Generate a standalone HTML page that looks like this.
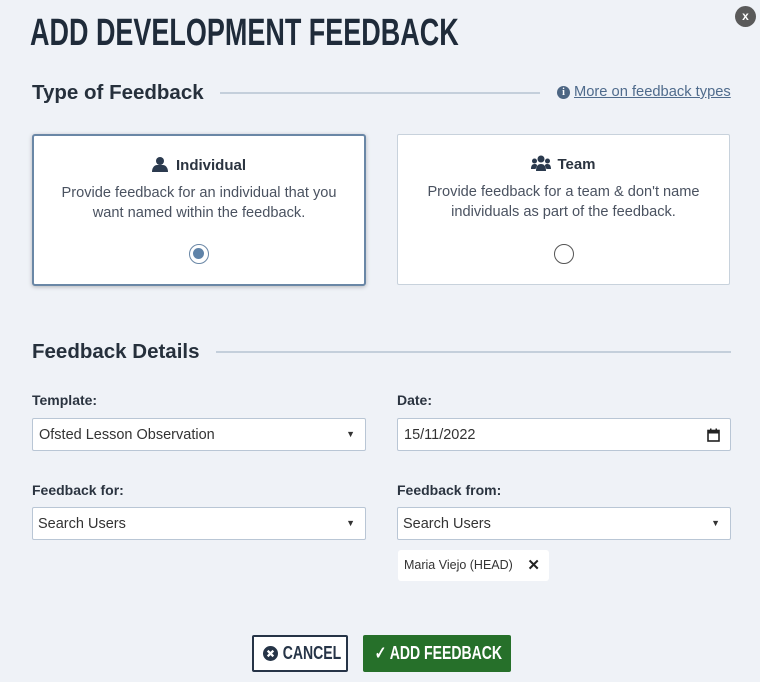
<!DOCTYPE html>
<html><head><meta charset="utf-8"><style>
*{box-sizing:border-box;margin:0;padding:0}
body{width:760px;height:682px;background:#eff2f7;font-family:"Liberation Sans",sans-serif;color:#2b3440;position:relative;overflow:hidden}
.abs{position:absolute}
.title{left:30px;top:12px;font-weight:bold;font-size:38px;color:#1f2b3a;transform:scaleX(0.71);transform-origin:left top;white-space:nowrap}
.h2{font-size:20.5px;font-weight:bold;color:#26303c;white-space:nowrap}
.line{height:2px;background:#c4cfdb}
.card{background:#fff;text-align:center}
.card .t{font-weight:bold;font-size:15px;margin-top:20px;color:#2b3440}
.card .d{font-size:14.6px;line-height:20px;color:#4a5260;margin-top:9px;white-space:nowrap}
.radio{position:absolute;width:20px;height:20px;border-radius:50%;border:1.5px solid #555;left:50%;margin-left:-10px;top:109px;background:#fff}
.lbl{font-size:14px;font-weight:bold;color:#2b3440}
.inp{background:#fff;border:1px solid #b9c6d5;border-radius:2px;height:33px;font-size:14.5px;line-height:33px;padding-left:6px;color:#333}
.arr{position:absolute;right:10px;top:0;font-size:9px;color:#333;line-height:31px}
.btn{font-weight:bold;font-size:18px;text-align:center;border-radius:2px;white-space:nowrap}
.sq{display:inline-block;transform:scaleX(0.78);transform-origin:center}
</style></head><body>
<div class="abs" style="left:735px;top:6px;width:21px;height:21px;border-radius:50%;background:#5a5a5a;color:#fff;font-size:12px;font-weight:bold;text-align:center;line-height:20px">x</div>
<div class="abs title">ADD DEVELOPMENT FEEDBACK</div>

<div class="abs h2" style="left:32px;top:81px">Type of Feedback</div>
<div class="abs line" style="left:220px;top:92px;width:320px"></div>
<div class="abs" style="left:557px;top:86px;width:13px;height:13px;border-radius:50%;background:#4d6683;color:#fff;font-size:10px;font-weight:bold;text-align:center;line-height:13px;font-family:'Liberation Serif',serif">i</div>
<div class="abs" style="left:574px;top:84px;font-size:14.7px;color:#4f6b8c;text-decoration:underline;white-space:nowrap">More on feedback types</div>

<div class="abs card" style="left:32px;top:134px;width:334px;height:152px;border:2px solid #6a87a6;border-radius:3px;box-shadow:0 1px 4px rgba(0,0,0,.25)">
<div class="t"><svg width="16" height="16" viewBox="0 0 16 16" style="vertical-align:-2px;margin-right:8px"><circle cx="8" cy="5" r="4" fill="#2b3a4e"/><path d="M0 16c0-5 3-7 5-7h6c2 0 5 2 5 7z" fill="#2b3a4e"/></svg>Individual</div>
<div class="d">Provide feedback for an individual that you<br>want named within the feedback.</div>
<div class="radio" style="border-color:#6a87a6;top:108px"><div style="position:absolute;left:3px;top:3px;width:11px;height:11px;border-radius:50%;background:#5f83a8"></div></div>
</div>
<div class="abs card" style="left:397px;top:134px;width:333px;height:151px;border:1px solid #c8d2dc;border-radius:2px">
<div class="t"><svg width="20" height="16" viewBox="0 0 20 16" style="vertical-align:-2px;margin-right:6px"><circle cx="10" cy="4" r="3.5" fill="#2b3a4e"/><circle cx="3.5" cy="6" r="2.5" fill="#2b3a4e"/><circle cx="16.5" cy="6" r="2.5" fill="#2b3a4e"/><path d="M5 16c0-5 2-7 5-7s5 2 5 7z" fill="#2b3a4e"/><path d="M0 14c0-3 1-5 3.5-5S6 10 6 11L4.5 14z M20 14c0-3-1-5-3.5-5S14 10 14 11l1.5 3z" fill="#2b3a4e"/></svg>Team</div>
<div class="d">Provide feedback for a team &amp; don't name<br>individuals as part of the feedback.</div>
<div class="radio" style="top:109px"></div>
</div>

<div class="abs h2" style="left:32px;top:340px">Feedback Details</div>
<div class="abs line" style="left:216px;top:351px;width:515px"></div>

<div class="abs lbl" style="left:32px;top:392px">Template:</div>
<div class="abs lbl" style="left:397px;top:392px">Date:</div>
<div class="abs inp" style="left:32px;top:418px;width:334px">Ofsted Lesson Observation<span class="arr">▼</span></div>
<div class="abs inp" style="left:397px;top:418px;width:334px">15/11/2022<svg class="arr" style="top:9px" width="13" height="14" viewBox="0 0 13 14"><rect x="1" y="2.5" width="11" height="10.5" fill="none" stroke="#222" stroke-width="1.6"/><rect x="1" y="2.5" width="11" height="3" fill="#222"/><rect x="3" y="0.5" width="1.5" height="3" fill="#222"/><rect x="8.5" y="0.5" width="1.5" height="3" fill="#222"/></svg></div>

<div class="abs lbl" style="left:32px;top:482px">Feedback for:</div>
<div class="abs lbl" style="left:397px;top:482px">Feedback from:</div>
<div class="abs inp" style="left:32px;top:507px;width:334px;padding-left:5px">Search Users<span class="arr">▼</span></div>
<div class="abs inp" style="left:397px;top:507px;width:334px;padding-left:5px">Search Users<span class="arr">▼</span></div>

<div class="abs" style="left:398px;top:550px;width:151px;height:31px;background:#fff;border-radius:3px;font-size:12.5px;line-height:31px;padding-left:6px;color:#333;white-space:nowrap">Maria Viejo (HEAD)<span style="position:absolute;right:9px;font-weight:bold;font-size:15px;color:#222">✕</span></div>

<div class="abs btn" style="left:252px;top:635px;width:96px;height:37px;border:2px solid #263447;background:#fff;color:#263447;line-height:33px"><svg width="15" height="15" viewBox="0 0 16 16" style="position:absolute;left:9px;top:9px"><circle cx="8" cy="8" r="8" fill="#263447"/><path d="M5 5l6 6M11 5l-6 6" stroke="#fff" stroke-width="2.4"/></svg><span class="sq" style="position:absolute;left:18px;width:80px">CANCEL</span></div>
<div class="abs btn" style="left:363px;top:635px;width:148px;height:37px;background:#26702a;color:#fff;line-height:37px"><span class="sq" style="position:absolute;left:-6px;width:160px">✓ ADD FEEDBACK</span></div>
</body></html>
